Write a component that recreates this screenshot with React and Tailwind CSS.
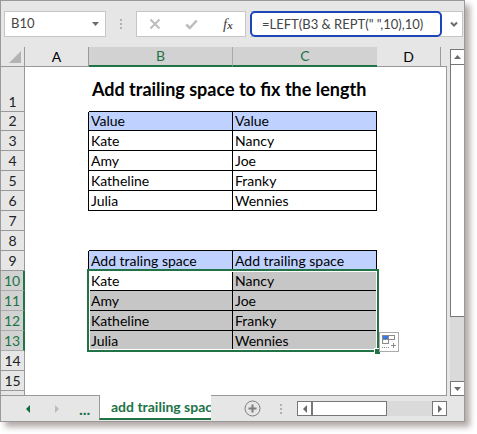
import clsx from 'clsx';

const rows = [
    { n: 2, kind: 'head', cells: ['Value', 'Value'] },
    { n: 3, kind: 'data', cells: ['Kate', 'Nancy'] },
    { n: 4, kind: 'data', cells: ['Amy', 'Joe'] },
    { n: 5, kind: 'data', cells: ['Katheline', 'Franky'] },
    { n: 6, kind: 'data', cells: ['Julia', 'Wennies'] },
    { n: 7, kind: 'empty' },
    { n: 8, kind: 'empty', last: true },
    { n: 9, kind: 'head', cells: ['Add traling space', 'Add trailing space'] },
    { n: 10, kind: 'selected', cells: ['Kate', 'Nancy'] },
    { n: 11, kind: 'selected', cells: ['Amy', 'Joe'] },
    { n: 12, kind: 'selected', cells: ['Katheline', 'Franky'] },
    { n: 13, kind: 'selected', cells: ['Julia', 'Wennies'] },
    { n: 14, kind: 'empty' },
    { n: 15, kind: 'empty' },
];

function Arrow({ dir, className = 'fill-[#6b6b6b]' }) {
    const points = {
        up: '0,4 7,4 3.5,0',
        down: '0,0 7,0 3.5,4',
        left: '4,0 4,8 0,4',
        right: '0,0 0,8 4,4',
    };
    const wide = dir === 'up' || dir === 'down';
    return (
        <svg width={wide ? 7 : 4} height={wide ? 4 : 8} className={className} aria-hidden="true">
            <polygon points={points[dir]} />
        </svg>
    );
}

function Dots() {
    return (
        <svg width="2" height="10" className="fill-[#b0b0b0]" aria-hidden="true">
            <rect width="2" height="2" />
            <rect y="4" width="2" height="2" />
            <rect y="8" width="2" height="2" />
        </svg>
    );
}

function FormulaBar() {
    return (
        <div className="flex items-center py-[10px] pr-px pl-[3px]">
            <div className="flex h-[26px] w-[102px] shrink-0 items-center border border-[#c6c6c6] bg-white">
                <input aria-label="Name box" defaultValue="B10" className="w-0 flex-1 pl-[6px] text-[13px] text-[#444] outline-none" />
                <button aria-label="Open name list" className="px-[6px]"><Arrow dir="down" /></button>
            </div>
            <div className="flex w-[30px] shrink-0 justify-center"><Dots /></div>
            <div className="flex h-[26px] w-[110px] shrink-0 items-center border border-[#c6c6c6] bg-white pl-[12px]">
                <button aria-label="Cancel">
                    <svg width="12" height="12" className="fill-none stroke-[#bdbdbd] stroke-2"><path d="M1.5 1.5 10.5 10.5M10.5 1.5 1.5 10.5" /></svg>
                </button>
                <button aria-label="Enter" className="ml-[24px]">
                    <svg width="13" height="11" className="fill-none stroke-[#bdbdbd] stroke-[2.5]"><path d="M1.2 5.5 4.8 9 11.8 1.5" /></svg>
                </button>
                <button aria-label="Insert function" className="ml-[25px] font-['Liberation_Serif',serif] text-[15px] leading-[18px] text-[#444] italic">
                    f<span className="text-[11px] font-bold">x</span>
                </button>
            </div>
            <div className="ml-[4px] flex h-[26px] min-w-0 flex-1 items-center border border-l-0 border-[#c6c6c6] bg-white">
                <input
                    aria-label="Formula"
                    defaultValue={'=LEFT(B3 & REPT(" ",10),10)'}
                    className="-my-px h-[26px] w-0 flex-1 rounded-[5px] border-2 border-[#1c46b8] bg-white pl-[10px] text-[13px] text-[#444] outline-none"
                />
                <button aria-label="Expand formula bar" className="pr-[4px] pl-[8px]">
                    <svg width="8" height="7" className="fill-none stroke-[#6b6b6b] stroke-2"><path d="M1 1.5 4 4.5 7 1.5" /></svg>
                </button>
            </div>
        </div>
    );
}

// Green frame round B10:C13, with fill handle and auto fill button
function Selection() {
    return (
        <span className="pointer-events-none absolute -top-[2px] -left-[2px] z-10 block h-[83px] w-[292px] border-2 border-[#217346]">
            <span className="block h-full border border-white" />
            <span className="absolute -right-[3px] -bottom-[4px] block size-[6px] border-t border-l border-white bg-[#217346]" />
            <button aria-label="Auto fill options" className="pointer-events-auto absolute -right-[22px] -bottom-[2px] flex size-[20px] items-center justify-center border border-[#ababab] bg-white">
                <svg width="15" height="14" fill="none" stroke="#8a8a8a">
                    <rect x="0.5" y="0.5" width="6" height="4" fill="#3b78e7" />
                    <rect x="6.5" y="0.5" width="6" height="4" />
                    <rect x="0.5" y="4.5" width="6" height="4" />
                    <path d="M0 12.5H8" strokeDasharray="1 1" />
                    <path d="M9 10.5H14M11.5 8V13" />
                </svg>
            </button>
        </span>
    );
}

function RowHeader({ n, selected, className = 'h-[20px]' }) {
    return (
        <th
            scope="row"
            className={clsx(
                'border-r border-b p-0 text-center align-bottom font-normal',
                selected ? 'border-r-2 border-r-[#217346] border-b-[#ababab] bg-[#d2d2d2] text-[#217346]' : 'border-[#999] bg-[#e6e6e6] text-[#222]',
                className,
            )}
        >
            {n}
        </th>
    );
}

function Row({ n, kind, cells = ['', ''], last }) {
    const filled = kind !== 'empty';
    const selected = kind === 'selected';
    return (
        <tr>
            <RowHeader n={n} selected={selected} className={n === 2 ? 'h-[19px]' : 'h-[20px]'} />
            <td className={clsx('p-0', filled && 'border-r border-black')} />
            {cells.map((text, i) => (
                <td
                    key={i}
                    className={clsx(
                        'relative p-0 pl-[2px] whitespace-pre',
                        filled && 'border-r border-b border-black',
                        last && 'border-b border-black',
                        kind === 'head' && 'bg-[#bfd2ff]',
                        selected && !(n === 10 && i === 0) && 'bg-[#c6c6c6]',
                    )}
                >
                    {text}
                    {n === 10 && i === 0 && <Selection />}
                </td>
            ))}
            <td className="p-0" />
            <td className="border-r border-[#999] p-0" />
        </tr>
    );
}

function Sheet() {
    return (
        <table className="w-full table-fixed border-separate border-spacing-0 bg-white text-[14px] leading-[18px] text-black">
            <colgroup>
                <col className="w-[24px]" />
                <col className="w-[64px]" />
                <col className="w-[144px]" />
                <col className="w-[144px]" />
                <col className="w-[64px]" />
                <col />
            </colgroup>
            <thead>
                <tr className="bg-[#e6e6e6]">
                    <th className="h-[20px] border-r border-b border-[#999] p-0" aria-label="Select all">
                        <svg width="12" height="12" className="ml-[8px] fill-[#b3b3b3]"><polygon points="12,0 12,12 0,12" /></svg>
                    </th>
                    <th className="border-r border-b border-[#999] p-0 font-normal">A</th>
                    <th className="border-r border-b-2 border-r-[#ababab] border-b-[#217346] bg-[#d2d2d2] p-0 font-normal text-[#217346]">B</th>
                    <th className="border-b-2 border-[#217346] bg-[#d2d2d2] p-0 font-normal text-[#217346]">C</th>
                    <th className="border-r border-b border-[#999] p-0 font-normal">D</th>
                    <th className="border-b border-[#999] p-0" />
                </tr>
            </thead>
            <tbody>
                <tr>
                    <RowHeader n={1} className="h-[45px]" />
                    <td className="p-0" />
                    <td colSpan={2} className="border-b border-black p-0 pl-[3px] text-[18px] font-bold whitespace-nowrap">
                        Add trailing space to fix the length
                    </td>
                    <td className="p-0" />
                    <td className="border-r border-[#999] p-0" />
                </tr>
                {rows.map(r => <Row key={r.n} {...r} />)}
                <tr>
                    <td className="h-[4px] border-r border-[#999] bg-[#e6e6e6] p-0" />
                    <td colSpan={5} className="border-r border-[#999] p-0" />
                </tr>
            </tbody>
        </table>
    );
}

function VerticalScroll() {
    return (
        <div className="mt-[2px] ml-[3px] flex w-[14px] shrink-0 flex-col bg-[#dadada]">
            <button aria-label="Scroll up" className="flex h-[16px] items-center justify-center border border-r-0 border-[#777] bg-white"><Arrow dir="up" /></button>
            <div className="h-[252px] border-b border-l border-[#777] bg-white" />
            <div className="flex-1" />
            <button aria-label="Scroll down" className="flex h-[15px] items-center justify-center border border-r-0 border-[#777] bg-white"><Arrow dir="down" /></button>
        </div>
    );
}

function SheetTabs() {
    return (
        <div className="flex h-[25px] items-center">
            <div className="flex w-[98px] shrink-0 items-center pl-[25px]">
                <button aria-label="Previous sheet"><Arrow dir="left" className="fill-[#0f6b3a]" /></button>
                <button aria-label="Next sheet" className="ml-[25px]"><Arrow dir="right" className="fill-[#bdbdbd]" /></button>
                <button aria-label="More sheets" className="ml-[20px] text-[16px] leading-[18px] font-bold text-[#217346]">...</button>
            </div>
            <button className="relative -mt-px h-[25px] w-[112px] shrink-0 self-start overflow-hidden border-b-2 border-l border-b-[#217346] border-l-[#999] bg-white pl-[11px] text-left text-[14px] font-bold whitespace-nowrap text-[#217346]">
                add trailing space
            </button>
            <button aria-label="New sheet" className="ml-[33px] shrink-0">
                <svg width="17" height="17" fill="none" stroke="#7d7d7d">
                    <circle cx="8.5" cy="8.5" r="7.5" />
                    <path d="M4.5 8.5H12.5M8.5 4.5V12.5" strokeWidth="2" />
                </svg>
            </button>
            <div className="ml-[19px] shrink-0"><Dots /></div>
            <div className="mr-[17px] ml-[15px] flex h-[15px] min-w-0 flex-1 bg-[#dadada]">
                <button aria-label="Scroll left" className="flex w-[15px] items-center justify-center border border-[#777] bg-white"><Arrow dir="left" /></button>
                <div className="w-[75px] border border-[#777] bg-white" />
                <div className="flex-1" />
                <button aria-label="Scroll right" className="flex w-[15px] items-center justify-center border border-[#777] bg-white"><Arrow dir="right" /></button>
            </div>
        </div>
    );
}

export default function App() {
    return (
        <div className="bg-white pr-[12px] pb-[12px] font-[Lato,'Noto_Sans',sans-serif]">
            <div className="border border-[#999] bg-[#e6e6e6] shadow-[5px_5px_6px_#b5aaaa]">
                <FormulaBar />
                <div className="flex">
                    <div className="min-w-0 flex-1 border-b border-[#999]"><Sheet /></div>
                    <VerticalScroll />
                </div>
                <SheetTabs />
            </div>
        </div>
    );
}
